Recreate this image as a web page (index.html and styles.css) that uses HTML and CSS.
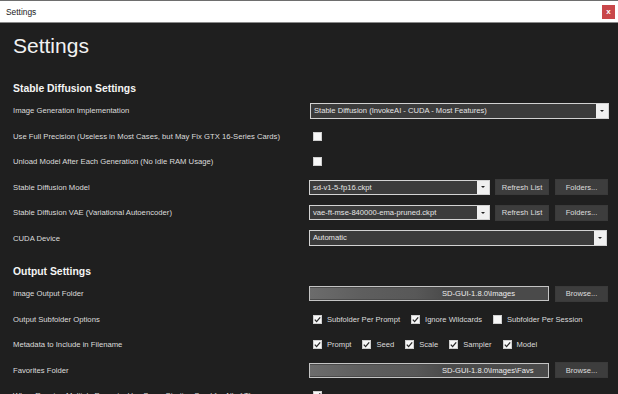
FILE: index.html
```html
<!DOCTYPE html>
<html>
<head>
<meta charset="utf-8">
<link rel="stylesheet" href="styles.css">
</head>
<body>
<div class="titlebar">
  <span class="wintitle">Settings</span>
  <span class="close">x</span>
</div>
<main class="content">
  <h1 class="page-title">Settings</h1>

  <h2 class="section">Stable Diffusion Settings</h2>
  <div class="grid">
    <div class="label">Image Generation Implementation</div>
    <div class="ctrl">
      <div class="combo w-full"><span class="val">Stable Diffusion (InvokeAI - CUDA - Most Features)</span><span class="arrow"></span></div>
    </div>

    <div class="label">Use Full Precision (Useless in Most Cases, but May Fix GTX 16-Series Cards)</div>
    <div class="ctrl"><span class="cb"></span></div>

    <div class="label">Unload Model After Each Generation (No Idle RAM Usage)</div>
    <div class="ctrl"><span class="cb"></span></div>

    <div class="label">Stable Diffusion Model</div>
    <div class="ctrl">
      <div class="combo w-model"><span class="val">sd-v1-5-fp16.ckpt</span><span class="arrow"></span></div>
      <button class="btn w-refresh">Refresh List</button>
      <button class="btn w-small">Folders...</button>
    </div>

    <div class="label">Stable Diffusion VAE (Variational Autoencoder)</div>
    <div class="ctrl">
      <div class="combo w-model"><span class="val">vae-ft-mse-840000-ema-pruned.ckpt</span><span class="arrow"></span></div>
      <button class="btn w-refresh">Refresh List</button>
      <button class="btn w-small">Folders...</button>
    </div>

    <div class="label">CUDA Device</div>
    <div class="ctrl">
      <div class="combo w-cuda"><span class="val">Automatic</span><span class="arrow"></span></div>
    </div>
  </div>

  <h2 class="section section-2">Output Settings</h2>
  <div class="grid">
    <div class="label">Image Output Folder</div>
    <div class="ctrl">
      <div class="path"><span class="blur"></span><span class="ptext">SD-GUI-1.8.0\Images</span></div>
      <button class="btn w-small">Browse...</button>
    </div>

    <div class="label">Output Subfolder Options</div>
    <div class="ctrl checks">
      <label class="opt"><span class="cb on"><svg viewBox="0 0 9 9"><polyline points="1.8,4.6 3.6,6.6 7.2,2.3"/></svg></span>Subfolder Per Prompt</label>
      <label class="opt"><span class="cb on"><svg viewBox="0 0 9 9"><polyline points="1.8,4.6 3.6,6.6 7.2,2.3"/></svg></span>Ignore Wildcards</label>
      <label class="opt"><span class="cb"></span>Subfolder Per Session</label>
    </div>

    <div class="label">Metadata to Include in Filename</div>
    <div class="ctrl checks">
      <label class="opt"><span class="cb on"><svg viewBox="0 0 9 9"><polyline points="1.8,4.6 3.6,6.6 7.2,2.3"/></svg></span>Prompt</label>
      <label class="opt"><span class="cb on"><svg viewBox="0 0 9 9"><polyline points="1.8,4.6 3.6,6.6 7.2,2.3"/></svg></span>Seed</label>
      <label class="opt"><span class="cb on"><svg viewBox="0 0 9 9"><polyline points="1.8,4.6 3.6,6.6 7.2,2.3"/></svg></span>Scale</label>
      <label class="opt"><span class="cb on"><svg viewBox="0 0 9 9"><polyline points="1.8,4.6 3.6,6.6 7.2,2.3"/></svg></span>Sampler</label>
      <label class="opt"><span class="cb on"><svg viewBox="0 0 9 9"><polyline points="1.8,4.6 3.6,6.6 7.2,2.3"/></svg></span>Model</label>
    </div>

    <div class="label">Favorites Folder</div>
    <div class="ctrl">
      <div class="path"><span class="blur"></span><span class="ptext">SD-GUI-1.8.0\Images\Favs</span></div>
      <button class="btn w-small">Browse...</button>
    </div>

    <div class="label">When Running Multiple Prompts, Use Same Starting Seed for All of Them</div>
    <div class="ctrl"><span class="cb on"><svg viewBox="0 0 9 9"><polyline points="1.8,4.6 3.6,6.6 7.2,2.3"/></svg></span></div>
  </div>
</main>
</body>
</html>
```

FILE: styles.css
```css
html, body {
  margin: 0;
  padding: 0;
  height: 100%;
  overflow: hidden;
}
body {
  background: #1f1f1f;
  font-family: "Liberation Sans", Arial, sans-serif;
  color: #dedede;
}
.titlebar {
  height: 21px;
  background: #ffffff;
  border-top: 1px solid #6e6e6e;
  border-bottom: 1px solid #8a8a8a;
  display: flex;
  align-items: center;
  justify-content: space-between;
  padding: 0 3px 0 6px;
}
.wintitle {
  font-size: 8.4px;
  color: #1a1a1a;
}
.close {
  width: 13px;
  height: 14px;
  background: #c9474a;
  color: #fff;
  font-size: 8px;
  font-weight: bold;
  line-height: 13px;
  text-align: center;
}
.content {
  padding: 0 10px 0 13px;
}
.page-title {
  margin: 11px 0 0 0;
  font-size: 21px;
  line-height: 24px;
  font-weight: normal;
  color: #f2f2f2;
}
.section {
  margin: 22px 0 0 0;
  font-size: 10.4px;
  line-height: 18px;
  font-weight: bold;
  color: #f4f4f4;
}
.section-2 {
  margin-top: 12px;
}
.grid {
  display: grid;
  grid-template-columns: 296px 1fr;
  grid-auto-rows: 25.5px;
  align-items: center;
}
.label {
  font-size: 7.7px;
  color: #dcdcdc;
  white-space: nowrap;
}
.ctrl {
  display: flex;
  align-items: center;
  gap: 5px;
}
.combo {
  box-sizing: border-box;
  height: 16px;
  display: flex;
  border: 1px solid #d2d2d2;
  background: #3b3b3b;
}
.w-full { width: 299px; margin-left: 1px; }
.w-model { width: 181px; height: 15px; }
.w-cuda { width: 298px; }
.val {
  flex: 1;
  padding-left: 3px;
  font-size: 7.6px;
  line-height: 14px;
  color: #e6e6e6;
  white-space: nowrap;
  overflow: hidden;
}
.w-model .val { line-height: 13px; }
.arrow {
  width: 12px;
  background: #f0f0f0;
  display: flex;
  align-items: center;
  justify-content: center;
}
.arrow::after {
  content: "";
  border-left: 2px solid transparent;
  border-right: 2px solid transparent;
  border-top: 2.5px solid #222;
}
.btn {
  box-sizing: border-box;
  height: 16px;
  padding: 0;
  border: 1px solid #3a3a3a;
  background: #3d3d3d;
  color: #dedede;
  font-family: "Liberation Sans", Arial, sans-serif;
  font-size: 7.6px;
}
.w-refresh { width: 54px; }
.w-small { width: 53px; margin-left: 1px; }
.path {
  box-sizing: border-box;
  width: 240px;
  height: 15px;
  display: flex;
  align-items: stretch;
  border: 1px solid #c4c4c4;
  background: #4a4a4a;
}
.blur {
  width: 132px;
  margin: 1px 0;
  background: linear-gradient(to right, #6c6c6c, #5e5e5e 40%, #585858 80%, #4c4c4c);
}
.ptext {
  font-size: 7.6px;
  line-height: 13px;
  color: #ececec;
  white-space: nowrap;
}
.cb {
  box-sizing: border-box;
  width: 9px;
  height: 9px;
  margin-left: 4px;
  background: #f7f7f7;
  border: 1px solid #cfcfcf;
  display: inline-flex;
  flex: none;
}
.cb svg {
  width: 9px;
  height: 9px;
  margin: -1px;
}
.cb polyline {
  fill: none;
  stroke: #2a2a2a;
  stroke-width: 1.3;
}
.checks {
  gap: 11px;
}
.opt {
  display: flex;
  align-items: center;
  gap: 5px;
  font-size: 7.6px;
  color: #dcdcdc;
  white-space: nowrap;
}
.opt + .opt .cb {
  margin-left: 0;
}
```
